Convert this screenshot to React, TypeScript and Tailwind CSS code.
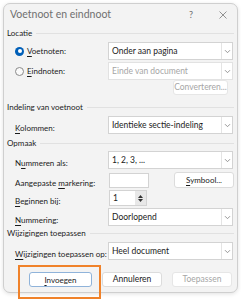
import React from 'react';

const font = { fontFamily: 'Lato, "Noto Sans", sans-serif' };

function Chevron() {
  return (
    <svg width="7" height="5" viewBox="0 0 7 5" fill="none">
      <path d="M1 1.2 L3.5 3.7 L6 1.2" stroke="#8a8a8a" strokeWidth="0.9" />
    </svg>
  );
}

function Select({ value, disabled }: { value: string; disabled?: boolean }) {
  return (
    <div
      className={`flex h-[18px] w-[125px] items-stretch border bg-white ${
        disabled ? 'border-[#e2e2e2]' : 'border-[#d3d3d3]'
      }`}
    >
      <div
        className={`flex flex-1 items-center whitespace-nowrap pl-[3px] text-[8.5px] ${
          disabled ? 'text-[#a6a6a6]' : 'text-[#1b1b1b]'
        }`}
      >
        {value}
      </div>
      <div className="flex w-[11px] items-center justify-center border-l border-[#e4e4e4]">
        <Chevron />
      </div>
    </div>
  );
}

function Heading({ text, className = '' }: { text: string; className?: string }) {
  return (
    <div className={`flex h-[14px] items-center gap-[4px] pl-[3px] pr-[3px] ${className}`}>
      <span className="whitespace-nowrap text-[8px] text-[#1b1b1b]">{text}</span>
      <div className="h-px flex-1 bg-[#e1e1e1]" />
    </div>
  );
}

function Label({ pre = '', key1, post }: { pre?: string; key1: string; post: string }) {
  return (
    <span className="whitespace-nowrap text-[8px] text-[#1b1b1b]">
      {pre}
      <span className="underline decoration-[0.5px] underline-offset-[1.5px]">{key1}</span>
      {post}
    </span>
  );
}

function Row({ children, className = '' }: { children: React.ReactNode; className?: string }) {
  return <div className={`flex h-[18px] items-center pr-[3px] ${className}`}>{children}</div>;
}

function Radio({ checked }: { checked?: boolean }) {
  return checked ? (
    <span className="mr-[3px] flex h-[9px] w-[9px] items-center justify-center rounded-full bg-[#005fb8]">
      <span className="h-[4px] w-[4px] rounded-full bg-white" />
    </span>
  ) : (
    <span className="mr-[3px] h-[9px] w-[9px] rounded-full border border-[#8a8a8a] bg-[#fafafa]" />
  );
}

function Button({
  children,
  w,
  variant = 'normal',
}: {
  children: React.ReactNode;
  w: string;
  variant?: 'normal' | 'default' | 'disabled';
}) {
  const cls =
    variant === 'default'
      ? 'border-[#8fb3da] text-[#1b1b1b]'
      : variant === 'disabled'
      ? 'border-[#e6e6e6] text-[#a6a6a6]'
      : 'border-[#dcdcdc] text-[#1b1b1b]';
  return (
    <div
      className={`flex h-[15px] items-center justify-center whitespace-nowrap rounded-[3px] border bg-white text-[8.5px] ${w} ${cls}`}
    >
      {children}
    </div>
  );
}

export default function App() {
  return (
    <div className="relative h-[300px] w-[241px] overflow-hidden bg-white pl-[3px] pt-[3px]" style={font}>
      <div className="flex h-[290px] w-[235px] flex-col rounded-[7px] border border-[#cfcfcf] bg-[#f3f3f3] shadow-[0_1px_4px_rgba(0,0,0,0.12)]">
        {/* titelbalk */}
        <div className="flex h-[22px] items-center pl-[6px] text-[10.5px] text-[#707070]">
          <span className="flex-1 whitespace-nowrap">Voetnoot en eindnoot</span>
          <span className="mr-[26px] text-[9px]">?</span>
          <svg width="8" height="8" viewBox="0 0 8 8" className="mr-[10px]">
            <path d="M0.5 0.5 L7.5 7.5 M7.5 0.5 L0.5 7.5" stroke="#777" strokeWidth="0.8" />
          </svg>
        </div>

        <Heading text="Locatie" />
        <Row className="mt-[2px]">
          <div className="flex w-[104px] items-center pl-[11px]">
            <Radio checked />
            <Label key1="V" post="oetnoten:" />
          </div>
          <Select value="Onder aan pagina" />
        </Row>
        <Row className="mt-[2px]">
          <div className="flex w-[104px] items-center pl-[11px]">
            <Radio />
            <Label key1="E" post="indnoten:" />
          </div>
          <Select value="Einde van document" disabled />
        </Row>
        <div className="flex h-[16px] justify-end pr-[9px]">
          <Button w="w-[55px]" variant="disabled">
            Converteren...
          </Button>
        </div>

        <Heading text="Indeling van voetnoot" className="mt-[4px]" />
        <Row className="mt-[2px]">
          <div className="w-[104px] pl-[11px]">
            <Label key1="K" post="olommen:" />
          </div>
          <Select value="Identieke sectie-indeling" />
        </Row>

        <Heading text="Opmaak" className="mt-[2px]" />
        <Row className="mt-[1px]">
          <div className="w-[104px] pl-[11px]">
            <Label pre="N" key1="u" post="mmeren als:" />
          </div>
          <Select value="1, 2, 3, ..." />
        </Row>
        <Row className="mt-[2px]">
          <div className="w-[105px] pl-[11px]">
            <Label pre="Aangepaste " key1="m" post="arkering:" />
          </div>
          <div className="h-[15px] w-[40px] border border-[#d3d3d3] bg-white" />
          <div className="flex-1" />
          <Button w="w-[60px] h-[16px]">
            <Label key1="S" post="ymbool..." />
          </Button>
        </Row>
        <Row>
          <div className="w-[105px] pl-[11px]">
            <Label key1="B" post="eginnen bij:" />
          </div>
          <div className="flex h-[16px] items-stretch border border-[#d3d3d3] bg-white">
            <div className="flex w-[25px] items-center pl-[3px] text-[8.5px] text-[#1b1b1b]">1</div>
            <div className="flex w-[11px] flex-col items-center justify-center gap-[1px] bg-[#e8e8e8]">
              <svg width="5" height="3" viewBox="0 0 5 3">
                <path d="M0 3 L2.5 0 L5 3 Z" fill="#333" />
              </svg>
              <svg width="5" height="3" viewBox="0 0 5 3">
                <path d="M0 0 L2.5 3 L5 0 Z" fill="#333" />
              </svg>
            </div>
          </div>
        </Row>
        <Row className="mt-[1px]">
          <div className="w-[104px] pl-[11px]">
            <Label key1="N" post="ummering:" />
          </div>
          <Select value="Doorlopend" />
        </Row>

        <Heading text="Wijzigingen toepassen" />
        <Row className="mt-[2px]">
          <div className="w-[104px] pl-[11px]">
            <Label key1="W" post="ijzigingen toepassen op:" />
          </div>
          <Select value="Heel document" />
        </Row>

        <div className="mt-[12px] flex items-center pl-[25px]">
          <Button w="w-[63px]" variant="default">
            <Label key1="I" post="nvoegen" />
          </Button>
          <div className="w-[10px]" />
          <Button w="w-[60px]">Annuleren</Button>
          <div className="w-[10px]" />
          <Button w="w-[60px]" variant="disabled">
            Toepassen
          </Button>
        </div>
      </div>

      {/* oranje markering */}
      <div className="absolute left-[18px] top-[265px] h-[34px] w-[83px] border-2 border-[#f0822a]" />
    </div>
  );
}
